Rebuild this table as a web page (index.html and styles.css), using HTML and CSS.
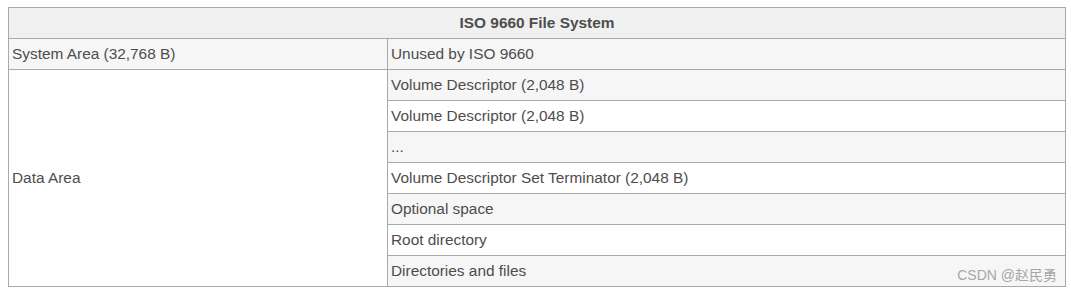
FILE: index.html
```html
<!DOCTYPE html>
<html lang="zh-CN">
<head>
<meta charset="utf-8">
<title>ISO 9660 File System</title>
<link rel="stylesheet" href="styles.css">
</head>
<body>
<div class="figure">
  <table class="layout">
    <thead>
      <tr><th colspan="2" class="title">ISO 9660 File System</th></tr>
    </thead>
    <tbody>
      <tr class="shade">
        <td class="area">System Area (32,768 B)</td>
        <td>Unused by ISO 9660</td>
      </tr>
      <tr class="shade">
        <td class="area plain" rowspan="7">Data Area</td>
        <td>Volume Descriptor (2,048 B)</td>
      </tr>
      <tr><td>Volume Descriptor (2,048 B)</td></tr>
      <tr class="shade"><td>...</td></tr>
      <tr><td>Volume Descriptor Set Terminator (2,048 B)</td></tr>
      <tr class="shade"><td>Optional space</td></tr>
      <tr><td>Root directory</td></tr>
      <tr class="shade"><td>Directories and files</td></tr>
    </tbody>
  </table>
  <span class="watermark">CSDN @赵民勇</span>
</div>
</body>
</html>
```
FILE: styles.css
```css
html, body {
  margin: 0;
  padding: 0;
  background: #ffffff;
}

body {
  padding: 7px 0 0 8px;
  font-family: "Liberation Sans", Arial, "Noto Sans CJK SC", sans-serif;
  color: #4d4d4d;
}

.figure {
  position: relative;
  width: 1058px;
}

.layout {
  width: 1058px;
  border-collapse: collapse;
  font-size: 15.4px;
  line-height: 24px;
}

.layout th,
.layout td {
  border: 1px solid #a9a9a9;
  padding: 3px 3px;
  text-align: left;
  vertical-align: middle;
  background: #ffffff;
}

.layout .title {
  background: #f0f0f0;
  text-align: center;
  font-weight: bold;
}

.layout tr.shade td {
  background: #f6f6f6;
}

.layout td.area {
  width: 372px;
}

.layout tr.shade td.plain {
  background: #ffffff;
}

.watermark {
  position: absolute;
  right: 9px;
  bottom: 4px;
  font-size: 14px;
  line-height: 16px;
  color: #a6a6a6;
  font-family: "Liberation Sans", Arial, "Noto Sans CJK SC", sans-serif;
}
```
